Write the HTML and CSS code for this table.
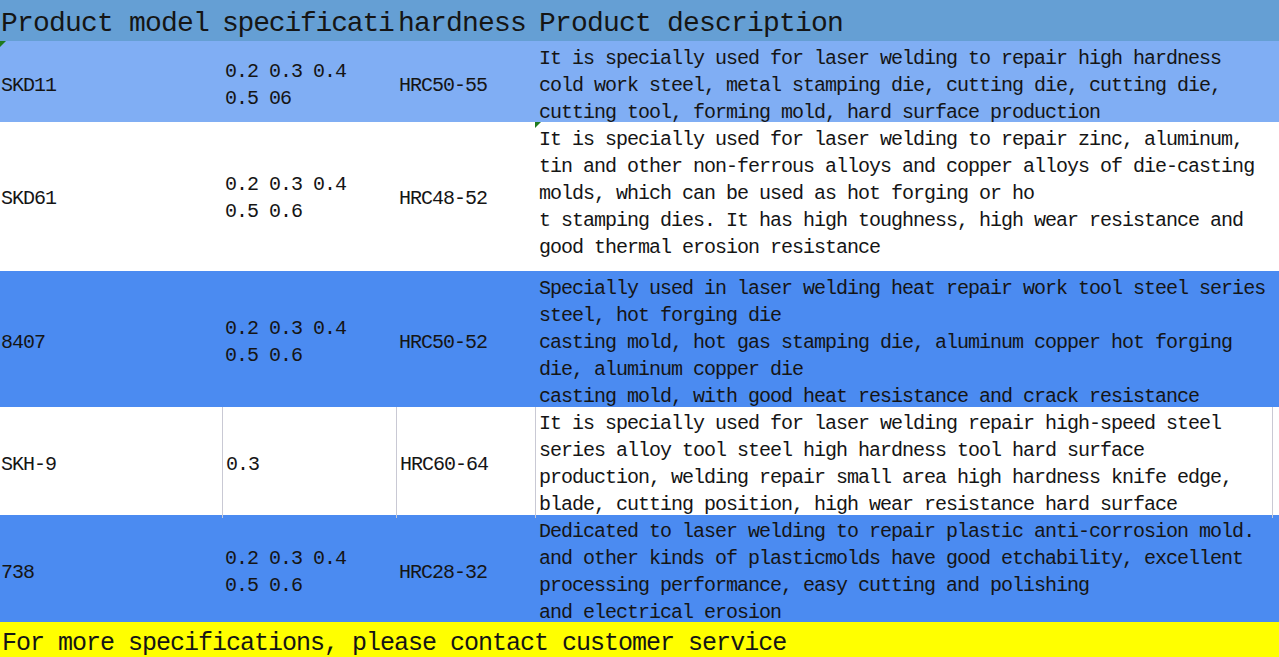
FILE: index.html
```html
<!DOCTYPE html>
<html lang="en">
<head>
<meta charset="utf-8">
<title>Product table</title>
<link rel="stylesheet" href="styles.css">
</head>
<body>
<div class="sheet">
  <div class="row head">
    <div class="cell">Product model</div>
    <div class="cell spec-h">specificati</div>
    <div class="cell">hardness</div>
    <div class="cell desc-h">Product description</div>
  </div>

  <div class="row r1">
    <div class="cell mark">SKD11</div>
    <div class="cell"><span class="lines"><span>0.2 0.3 0.4</span><span>0.5 06</span></span></div>
    <div class="cell">HRC50-55</div>
    <div class="cell desc">
      <span>It is specially used for laser welding to repair high hardness</span>
      <span>cold work steel, metal stamping die, cutting die, cutting die,</span>
      <span>cutting tool, forming mold, hard surface production</span>
    </div>
  </div>

  <div class="row r2">
    <div class="cell">SKD61</div>
    <div class="cell"><span class="lines"><span>0.2 0.3 0.4</span><span>0.5 0.6</span></span></div>
    <div class="cell">HRC48-52</div>
    <div class="cell desc mark">
      <span>It is specially used for laser welding to repair zinc, aluminum,</span>
      <span>tin and other non-ferrous alloys and copper alloys of die-casting</span>
      <span>molds, which can be used as hot forging or ho</span>
      <span>t stamping dies. It has high toughness, high wear resistance and</span>
      <span>good thermal erosion resistance</span>
    </div>
  </div>

  <div class="row r3">
    <div class="cell">8407</div>
    <div class="cell"><span class="lines"><span>0.2 0.3 0.4</span><span>0.5 0.6</span></span></div>
    <div class="cell">HRC50-52</div>
    <div class="cell desc">
      <span>Specially used in laser welding heat repair work tool steel series</span>
      <span>steel, hot forging die</span>
      <span>casting mold, hot gas stamping die, aluminum copper hot forging</span>
      <span>die, aluminum copper die</span>
      <span>casting mold, with good heat resistance and crack resistance</span>
    </div>
  </div>

  <div class="row r4">
    <div class="cell">SKH-9</div>
    <div class="cell bl">0.3</div>
    <div class="cell bl">HRC60-64</div>
    <div class="cell desc bl br">
      <span>It is specially used for laser welding repair high-speed steel</span>
      <span>series alloy tool steel high hardness tool hard surface</span>
      <span>production, welding repair small area high hardness knife edge,</span>
      <span>blade, cutting position, high wear resistance hard surface</span>
    </div>
  </div>

  <div class="row r5">
    <div class="cell">738</div>
    <div class="cell"><span class="lines"><span>0.2 0.3 0.4</span><span>0.5 0.6</span></span></div>
    <div class="cell">HRC28-32</div>
    <div class="cell desc">
      <span>Dedicated to laser welding to repair plastic anti-corrosion mold.</span>
      <span>and other kinds of plasticmolds have good etchability, excellent</span>
      <span>processing performance, easy cutting and polishing</span>
      <span>and electrical erosion</span>
    </div>
  </div>

  <div class="foot">For more specifications, please contact customer service</div>
</div>
</body>
</html>
```

FILE: styles.css
```css
html, body {
  margin: 0;
  padding: 0;
  background: #ffffff;
}

.sheet {
  width: 1279px;
  height: 657px;
  overflow: hidden;
  font-family: "Liberation Mono", "DejaVu Sans Mono", monospace;
  color: #151515;
  font-size: 20px;
  letter-spacing: -1px;
  line-height: 27px;
}

.row {
  display: grid;
  grid-template-columns: 222px 174px 139px 738px 6px;
}

.cell {
  position: relative;
  display: flex;
  align-items: center;
  padding: 3px 0 0 3px;
  white-space: nowrap;
  box-sizing: border-box;
  min-width: 0;
}

.cell:first-child {
  padding-left: 1px;
}

.lines {
  display: flex;
  flex-direction: column;
}

.desc {
  flex-direction: column;
  align-items: flex-start;
  justify-content: flex-start;
  padding: 4px 0 0 4px;
  overflow: visible;
}

.desc span {
  display: block;
  white-space: nowrap;
}

.head {
  height: 41px;
  background: #659fd4;
  font-size: 28px;
  letter-spacing: -0.8px;
  line-height: 34px;
}

.head .cell {
  padding: 7px 0 0 2px;
}

.head .cell:first-child {
  padding-left: 1px;
}

.head .spec-h {
  padding-left: 0;
  letter-spacing: -1.2px;
}

.head .desc-h {
  padding-left: 4px;
}

.r1 { height: 81px; background: #80aef4; }
.r2 { height: 149px; background: #ffffff; }
.r3 { height: 136px; background: #4b8bf1; }
.r4 { height: 108px; background: #ffffff; }
.r5 { height: 107px; background: #4b8bf1; }

.r4 .desc, .r5 .desc { padding-top: 3px; }

.bl { border-left: 1px solid #c9c9d4; }
.br { border-right: 1px solid #c9c9d4; }

.r4 .bl { padding-left: 3px; }
.r4 .desc { padding-left: 3px; }

.mark::before {
  content: "";
  position: absolute;
  left: 0;
  top: 0;
  width: 0;
  height: 0;
  border-top: 6px solid #1f7a1f;
  border-right: 6px solid transparent;
}

.foot {
  height: 35px;
  box-sizing: border-box;
  background: #ffff00;
  font-size: 25px;
  letter-spacing: -1px;
  line-height: 35px;
  padding: 4px 0 0 2px;
  white-space: nowrap;
}
```
